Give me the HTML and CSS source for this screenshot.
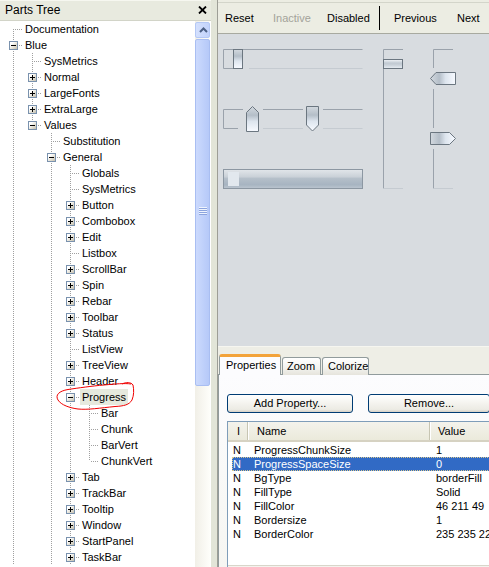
FILE: index.html
```html
<!DOCTYPE html>
<html>
<head>
<meta charset="utf-8">
<link rel="stylesheet" href="styles.css">
</head>
<body>
<div class="app">
  <div class="left">
    <div class="ptitle"><span>Parts Tree</span>
      <svg class="close" width="9" height="8" viewBox="0 0 9 8"><path d="M1 0.5 L8 7.5 M8 0.5 L1 7.5" stroke="#000" stroke-width="1.8"/></svg>
    </div>
    <div class="treewrap">
      <div class="tree">
        <div class="row"><span class="n b"></span><span class="lbl">Documentation</span></div>
        <div class="row"><span class="n tb"><i class="pm"></i></span><span class="lbl">Blue</span></div>
        <div class="row"><span class="g v"></span><span class="n tb"></span><span class="lbl">SysMetrics</span></div>
        <div class="row"><span class="g v"></span><span class="n tb"><i class="pm plus"></i></span><span class="lbl">Normal</span></div>
        <div class="row"><span class="g v"></span><span class="n tb"><i class="pm plus"></i></span><span class="lbl">LargeFonts</span></div>
        <div class="row"><span class="g v"></span><span class="n tb"><i class="pm plus"></i></span><span class="lbl">ExtraLarge</span></div>
        <div class="row"><span class="g v"></span><span class="n t"><i class="pm"></i></span><span class="lbl">Values</span></div>
        <div class="row"><span class="g v"></span><span class="g"></span><span class="n tb"></span><span class="lbl">Substitution</span></div>
        <div class="row"><span class="g v"></span><span class="g"></span><span class="n tb"><i class="pm"></i></span><span class="lbl">General</span></div>
        <div class="row"><span class="g v"></span><span class="g"></span><span class="g v"></span><span class="n tb"></span><span class="lbl">Globals</span></div>
        <div class="row"><span class="g v"></span><span class="g"></span><span class="g v"></span><span class="n tb"></span><span class="lbl">SysMetrics</span></div>
        <div class="row"><span class="g v"></span><span class="g"></span><span class="g v"></span><span class="n tb"><i class="pm plus"></i></span><span class="lbl">Button</span></div>
        <div class="row"><span class="g v"></span><span class="g"></span><span class="g v"></span><span class="n tb"><i class="pm plus"></i></span><span class="lbl">Combobox</span></div>
        <div class="row"><span class="g v"></span><span class="g"></span><span class="g v"></span><span class="n tb"><i class="pm plus"></i></span><span class="lbl">Edit</span></div>
        <div class="row"><span class="g v"></span><span class="g"></span><span class="g v"></span><span class="n tb"></span><span class="lbl">Listbox</span></div>
        <div class="row"><span class="g v"></span><span class="g"></span><span class="g v"></span><span class="n tb"><i class="pm plus"></i></span><span class="lbl">ScrollBar</span></div>
        <div class="row"><span class="g v"></span><span class="g"></span><span class="g v"></span><span class="n tb"><i class="pm plus"></i></span><span class="lbl">Spin</span></div>
        <div class="row"><span class="g v"></span><span class="g"></span><span class="g v"></span><span class="n tb"><i class="pm plus"></i></span><span class="lbl">Rebar</span></div>
        <div class="row"><span class="g v"></span><span class="g"></span><span class="g v"></span><span class="n tb"><i class="pm plus"></i></span><span class="lbl">Toolbar</span></div>
        <div class="row"><span class="g v"></span><span class="g"></span><span class="g v"></span><span class="n tb"><i class="pm plus"></i></span><span class="lbl">Status</span></div>
        <div class="row"><span class="g v"></span><span class="g"></span><span class="g v"></span><span class="n tb"></span><span class="lbl">ListView</span></div>
        <div class="row"><span class="g v"></span><span class="g"></span><span class="g v"></span><span class="n tb"><i class="pm plus"></i></span><span class="lbl">TreeView</span></div>
        <div class="row"><span class="g v"></span><span class="g"></span><span class="g v"></span><span class="n tb"><i class="pm plus"></i></span><span class="lbl">Header</span></div>
        <div class="row"><span class="g v"></span><span class="g"></span><span class="g v"></span><span class="n tb"><i class="pm"></i></span><span class="lbl sel">Progress</span></div>
        <div class="row"><span class="g v"></span><span class="g"></span><span class="g v"></span><span class="g v"></span><span class="n tb"></span><span class="lbl">Bar</span></div>
        <div class="row"><span class="g v"></span><span class="g"></span><span class="g v"></span><span class="g v"></span><span class="n tb"></span><span class="lbl">Chunk</span></div>
        <div class="row"><span class="g v"></span><span class="g"></span><span class="g v"></span><span class="g v"></span><span class="n tb"></span><span class="lbl">BarVert</span></div>
        <div class="row"><span class="g v"></span><span class="g"></span><span class="g v"></span><span class="g v"></span><span class="n t"></span><span class="lbl">ChunkVert</span></div>
        <div class="row"><span class="g v"></span><span class="g"></span><span class="g v"></span><span class="n tb"><i class="pm plus"></i></span><span class="lbl">Tab</span></div>
        <div class="row"><span class="g v"></span><span class="g"></span><span class="g v"></span><span class="n tb"><i class="pm plus"></i></span><span class="lbl">TrackBar</span></div>
        <div class="row"><span class="g v"></span><span class="g"></span><span class="g v"></span><span class="n tb"><i class="pm plus"></i></span><span class="lbl">Tooltip</span></div>
        <div class="row"><span class="g v"></span><span class="g"></span><span class="g v"></span><span class="n tb"><i class="pm plus"></i></span><span class="lbl">Window</span></div>
        <div class="row"><span class="g v"></span><span class="g"></span><span class="g v"></span><span class="n tb"><i class="pm plus"></i></span><span class="lbl">StartPanel</span></div>
        <div class="row"><span class="g v"></span><span class="g"></span><span class="g v"></span><span class="n tb"><i class="pm plus"></i></span><span class="lbl">TaskBar</span></div>
      </div>
      <div class="vscroll">
        <div class="sbtn"><svg width="15" height="15" viewBox="0 0 15 15"><path d="M4 9 L7.5 5.5 L11 9" fill="none" stroke="#4D6185" stroke-width="2"/></svg></div>
        <div class="thumb"><i class="grip"></i></div>
      </div>
    </div>
    <svg class="mark" width="211" height="567" viewBox="0 0 211 567">
      <path d="M122 384 C126 382 131 382 133 385 C134 390 134 395 132 400 C129 405 124 406 115 406.5 C100 408 88 410 78 409 C70 408 61 405 58 400 C55 395 59 391 68 389.5 C78 388 92 386 104 385 C115 384 125 383 131 384" fill="none" stroke="#F00000" stroke-width="1"/>
    </svg>
  </div>
  <div class="split"></div>
  <div class="right">
    <div class="toolbar">
      <span class="tb w-reset">Reset</span>
      <span class="tb w-inact dis">Inactive</span>
      <span class="tb w-disab">Disabled</span>
      <span class="tsep"></span>
      <span class="tb w-prev">Previous</span>
      <span class="tb">Next</span>
    </div>
    <div class="preview">
      <svg width="271" height="312" viewBox="218 34 271 312">
        <defs>
          <linearGradient id="tv" x1="0" y1="0" x2="0" y2="1">
            <stop offset="0" stop-color="#D3D9DF"/>
            <stop offset="0.35" stop-color="#B4BEC8"/>
            <stop offset="0.6" stop-color="#DDE5EE"/>
            <stop offset="1" stop-color="#F7FAFF"/>
          </linearGradient>
          <linearGradient id="th" x1="0" y1="0" x2="1" y2="0">
            <stop offset="0" stop-color="#D3D9DF"/>
            <stop offset="0.35" stop-color="#B4BEC8"/>
            <stop offset="0.6" stop-color="#DDE5EE"/>
            <stop offset="1" stop-color="#F7FAFF"/>
          </linearGradient>
          <linearGradient id="hb" x1="0" y1="0" x2="0" y2="1">
            <stop offset="0" stop-color="#F2F5F8"/>
            <stop offset="0.4" stop-color="#C0C9D2"/>
            <stop offset="0.6" stop-color="#C8D0D8"/>
            <stop offset="1" stop-color="#E8EEF4"/>
          </linearGradient>
          <linearGradient id="pb" x1="0" y1="0" x2="0" y2="1">
            <stop offset="0" stop-color="#E2E6EA"/>
            <stop offset="0.4" stop-color="#C9D0D7"/>
            <stop offset="0.45" stop-color="#B6C0CA"/>
            <stop offset="0.8" stop-color="#A7B4C1"/>
            <stop offset="1" stop-color="#BCC6D0"/>
          </linearGradient>
        </defs>
        <g fill="none" stroke="#9AA2AB" stroke-width="1">
          <path d="M223.5 68.5 V49.5 H362.5"/>
          <path d="M223.5 68.5 H233" />
          <path d="M249 68.5 H362.5" stroke="#C5CBD1"/>
          <path d="M238 128.5 H223.5 V109.5 H243"/>
          <path d="M263 109.5 H303"/>
          <path d="M263 128.5 H303" stroke="#C5CBD1"/>
          <path d="M323 109.5 H362.5"/>
          <path d="M323 128.5 H362.5" stroke="#C5CBD1"/>
          <path d="M403 49.5 H383.5 V188.5"/>
          <path d="M383.5 188.5 H403" stroke="#C5CBD1"/>
          <path d="M453 49.5 H433.5 V68"/>
          <path d="M433.5 89 V128"/>
          <path d="M433.5 149 V188.5"/>
          <path d="M433.5 188.5 H453" stroke="#C5CBD1"/>
        </g>
        <g stroke="#6B7680" stroke-width="1">
          <rect x="233.5" y="49.5" width="9" height="19" fill="url(#tv)"/>
          <path d="M246.5 131.5 V112.5 L252.5 106.5 L258.5 112.5 V131.5 Z" fill="url(#tv)"/>
          <path d="M306.5 106.5 H318.5 V125 L312.5 131 L306.5 125 Z" fill="url(#tv)"/>
          <rect x="383.5" y="59.5" width="19" height="9" fill="url(#hb)"/>
          <path d="M455.5 72.5 H436 L430.5 78.5 L436 84.5 H455.5 Z" fill="url(#th)"/>
          <path d="M430.5 132.5 H449.5 L455.5 138.5 L449.5 144.5 H430.5 Z" fill="url(#th)"/>
        </g>
        <rect x="223.5" y="169.5" width="139" height="19" fill="url(#pb)" stroke="#8C97A2"/>
        <rect x="228" y="172" width="11" height="14" fill="#E2E8EE"/>
      </svg>
    </div>
    <div class="lower">
      <div class="tabs">
        <span class="tab act">Properties</span>
        <span class="tab t-zoom">Zoom</span>
        <span class="tab t-col">Colorize</span>
      </div>
      <div class="panel">
        <div class="btns">
          <span class="btn w-add">Add Property...</span>
          <span class="btn w-rem">Remove...</span>
        </div>
        <div class="list">
          <div class="lhead">
            <span class="hc hc1">I</span>
            <span class="hc hc2">Name</span>
            <span class="hc hc3">Value</span>
          </div>
          <div class="lrow"><span class="c1">N</span><span>ProgressChunkSize</span><span>1</span></div>
          <div class="lrow on"><span class="c1">N</span><span>ProgressSpaceSize</span><span>0</span></div>
          <div class="lrow"><span class="c1">N</span><span>BgType</span><span>borderFill</span></div>
          <div class="lrow"><span class="c1">N</span><span>FillType</span><span>Solid</span></div>
          <div class="lrow"><span class="c1">N</span><span>FillColor</span><span>46 211 49</span></div>
          <div class="lrow"><span class="c1">N</span><span>Bordersize</span><span>1</span></div>
          <div class="lrow"><span class="c1">N</span><span>BorderColor</span><span>235 235 222</span></div>
          <div class="lfoot"></div>
        </div>
      </div>
    </div>
  </div>
</div>
</body>
</html>
```
FILE: styles.css
```css
* { box-sizing: border-box; }
body {
  margin: 0;
  width: 489px;
  height: 567px;
  overflow: hidden;
  font: 11px "Liberation Sans", Arial, sans-serif;
  color: #000;
  background: #ECEDE3;
}
.app { display: flex; height: 567px; }

.left {
  width: 211px;
  flex: none;
  display: flex;
  flex-direction: column;
  position: relative;
}
.ptitle {
  height: 21px;
  flex: none;
  background: #E8EADF;
  border-bottom: 1px solid #D2D4C8;
  border-top: 1px solid #F6F7F0;
  display: flex;
  align-items: center;
  justify-content: space-between;
  padding: 0 4px 1px 5px;
  font-size: 12px;
}
.close { display: block; }
.treewrap { flex: 1; display: flex; min-height: 0; }
.tree {
  width: 195px;
  flex: none;
  background: #fff;
  padding-left: 4px;
  overflow: hidden;
}
.row { display: flex; height: 16px; white-space: nowrap; }
.g, .n { width: 19px; height: 16px; flex: none; position: relative; }
.g.v::before, .n::before {
  content: "";
  position: absolute;
  left: 9px;
  width: 1px;
  top: 0;
  bottom: 0;
  background: repeating-linear-gradient(to bottom, #A0A0A0 0 1px, transparent 1px 2px);
}
.n.t::before { bottom: 8px; }
.n.b::before { top: 8px; }
.n::after {
  content: "";
  position: absolute;
  left: 10px;
  width: 9px;
  top: 8px;
  height: 1px;
  background: repeating-linear-gradient(to right, transparent 0 1px, #A0A0A0 1px 2px);
}
.pm {
  position: absolute;
  z-index: 1;
  left: 5px;
  top: 4px;
  width: 9px;
  height: 9px;
  border: 1px solid #7A92AE;
  background: linear-gradient(135deg, #FFFFFF 25%, #E4E1D6 60%, #C4BFAE);
}
.pm::before {
  content: "";
  position: absolute;
  left: 1px;
  top: 3px;
  width: 5px;
  height: 1px;
  background: #000;
}
.pm.plus::after {
  content: "";
  position: absolute;
  left: 3px;
  top: 1px;
  width: 1px;
  height: 5px;
  background: #000;
}
.lbl { padding: 0 2px; line-height: 16px; height: 16px; color: #000; }
.lbl.sel { background: #E6E9DD; }

.vscroll {
  width: 16px;
  flex: none;
  border-right: 1px solid #fff;
  background: linear-gradient(to right, #F1EFE7, #FEFEFA);
  padding-top: 1px;
  display: flex;
  flex-direction: column;
  gap: 1px;
}
.sbtn {
  height: 16px;
  border: 1px solid #B4C8F5;
  border-radius: 2px;
  background: linear-gradient(to right, #D4E0FD, #C2D3FB);
}
.sbtn svg { display: block; }
.thumb {
  height: 347px;
  border: 1px solid #A9BEF2;
  border-radius: 2px;
  background: linear-gradient(to right, #CCDAFD, #BCCEFA 70%, #B6C9F8);
  display: flex;
  align-items: center;
  justify-content: center;
  padding-bottom: 4px;
}
.grip {
  width: 8px;
  height: 8px;
  background: repeating-linear-gradient(to bottom, #EEF4FE 0 1px, #8CA4DE 1px 2px);
}
.mark { position: absolute; left: 0; top: 0; pointer-events: none; }

.split {
  width: 7px;
  flex: none;
  background: #E2E5D8;
  border-right: 1px solid #9D9E96;
}

.right {
  flex: 1;
  min-width: 0;
  display: flex;
  flex-direction: column;
}
.toolbar {
  margin-top: 2px;
  height: 32px;
  flex: none;
  border-top: 1px solid #D3D5CA;
  border-bottom: 1px solid #A8AAA0;
  background: #ECEDE3;
  display: flex;
  align-items: center;
  padding-left: 7px;
  white-space: nowrap;
  font-size: 11px;
}
.tb { flex: none; }
.w-reset { width: 48px; }
.w-inact { width: 54px; }
.w-disab { width: 52px; }
.w-prev { width: 63px; }
.dis { color: #A3A39A; }
.tsep {
  width: 1px;
  height: 24px;
  background: #000;
  margin-right: 14px;
  flex: none;
}
.preview {
  height: 312px;
  flex: none;
  background: #D8DCE0;
}
.preview svg { display: block; }

.lower {
  flex: 1;
  display: flex;
  flex-direction: column;
  background: #EEEEE6;
  border-top: 1px solid #F6F6F0;
  padding-top: 8px;
  min-height: 0;
}
.tabs {
  display: flex;
  align-items: flex-end;
  padding-left: 1px;
  height: 20px;
  position: relative;
  z-index: 1;
  margin-bottom: -1px;
}
.tab {
  height: 18px;
  border: 1px solid #919B9C;
  border-bottom: none;
  border-radius: 3px 3px 0 0;
  background: linear-gradient(to bottom, #FFFFFF, #F2F2EE 60%, #E6E4DC);
  padding: 2px 0 0 5px;
  margin-left: 1px;
}
.tab.act {
  height: 21px;
  width: 62px;
  margin-left: 0;
  border-top: 3px solid #F3A33A;
  background: #FCFCFE;
  padding: 2px 0 0 6px;
  border-color: #F3A33A #919B9C #919B9C;
}
.t-zoom { width: 39px; padding-left: 4px; }
.t-col { width: 47px; margin-left: 1px; padding-left: 5px; }
.panel {
  flex: 1;
  border-top: 1px solid #919B9C;
  border-left: 1px solid #919B9C;
  background: linear-gradient(to bottom, #FCFCFE, #F6F6F2);
  padding: 19px 0 0 8px;
  min-height: 0;
  overflow: hidden;
}
.btns { display: flex; gap: 15px; height: 19px; }
.btn {
  height: 19px;
  border: 1px solid #003C74;
  border-radius: 3px;
  background: linear-gradient(to bottom, #FFFFFF, #F4F3EE 50%, #ECEBE4 85%, #D6D0C5);
  display: flex;
  align-items: center;
  justify-content: center;
  flex: none;
  padding-bottom: 1px;
}
.w-add { width: 126px; }
.w-rem { width: 122px; }
.list {
  margin-top: 8px;
  width: 280px;
  height: 160px;
  border: 1px solid #7F9DB9;
  background: #fff;
  position: relative;
}
.lhead {
  height: 20px;
  display: flex;
  background: linear-gradient(to bottom, #F4F3EC, #EBEADB);
  border-bottom: 2px solid #D6D2C2;
  margin-bottom: 1px;
}
.hc {
  display: flex;
  align-items: center;
  height: 18px;
  border-right: 1px solid #C7C5B2;
  box-shadow: 1px 0 0 #fff;
}
.hc1 { width: 20px; padding-left: 9px; }
.hc2 { width: 182px; padding-left: 9px; }
.hc3 { flex: 1; padding-left: 8px; border-right: none; box-shadow: none; }
.lrow {
  display: grid;
  grid-template-columns: 22px 182px 1fr;
  height: 14px;
  line-height: 14px;
  margin-left: 4px;
  white-space: nowrap;
}
.lrow .c1 { padding-left: 1px; }
.lrow.on {
  background: #316AC5;
  color: #fff;
  outline: 1px dotted #D8C890;
  outline-offset: -1px;
}
.lfoot {
  position: absolute;
  left: 0;
  right: 0;
  top: 143px;
  height: 17px;
  border-top: 1px solid #D8D6CA;
  background: #F4F3EE;
}
```
